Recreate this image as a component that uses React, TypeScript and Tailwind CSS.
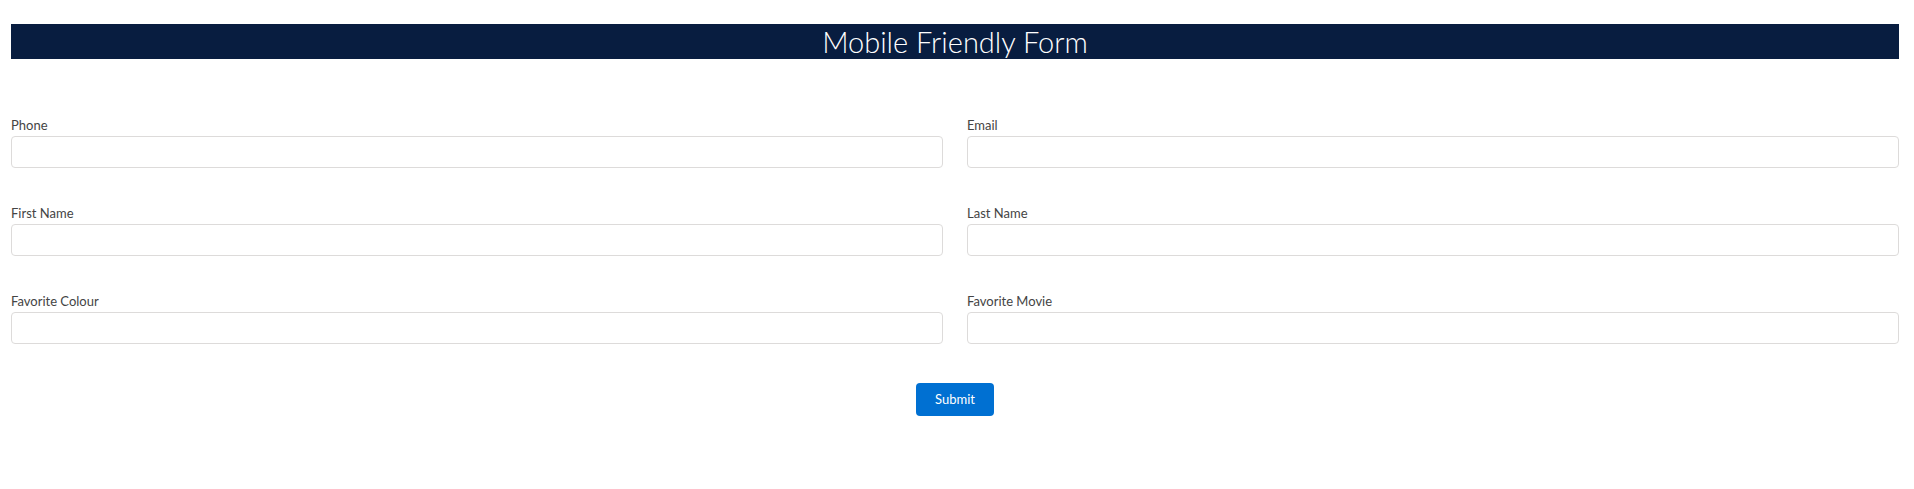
import React from "react";

const fields = [
  ["Phone", "Email"],
  ["First Name", "Last Name"],
  ["Favorite Colour", "Favorite Movie"],
];

const Field: React.FC<{ label: string }> = ({ label }) => (
  <div className="flex flex-col">
    <label className="text-[13px] leading-[18px] text-[#444444] mb-[2px]">{label}</label>
    <input
      type="text"
      className="h-[32px] w-full rounded-[4px] border border-[#dddbda] bg-white px-3 text-[13px] outline-none"
    />
  </div>
);

export default function App() {
  return (
    <div
      className="min-h-[489px] bg-white pt-[24px] pl-[11px] pr-[15px]"
      style={{ fontFamily: "Lato, 'Open Sans', Arial, sans-serif" }}
    >
      <div className="h-[35px] bg-[#081d40] flex items-center justify-center">
        <h1 className="text-[29px] leading-[35px] font-light text-white">Mobile Friendly Form</h1>
      </div>

      <div className="mt-[57px] flex flex-col gap-[36px]">
        {fields.map(([a, b]) => (
          <div key={a} className="grid grid-cols-2 gap-x-[24px]">
            <Field label={a} />
            <Field label={b} />
          </div>
        ))}
      </div>

      <div className="mt-[39px] flex justify-center">
        <button className="h-[33px] w-[78px] rounded-[4px] bg-[#0070d2] text-[13px] font-normal text-white">
          Submit
        </button>
      </div>
    </div>
  );
}
